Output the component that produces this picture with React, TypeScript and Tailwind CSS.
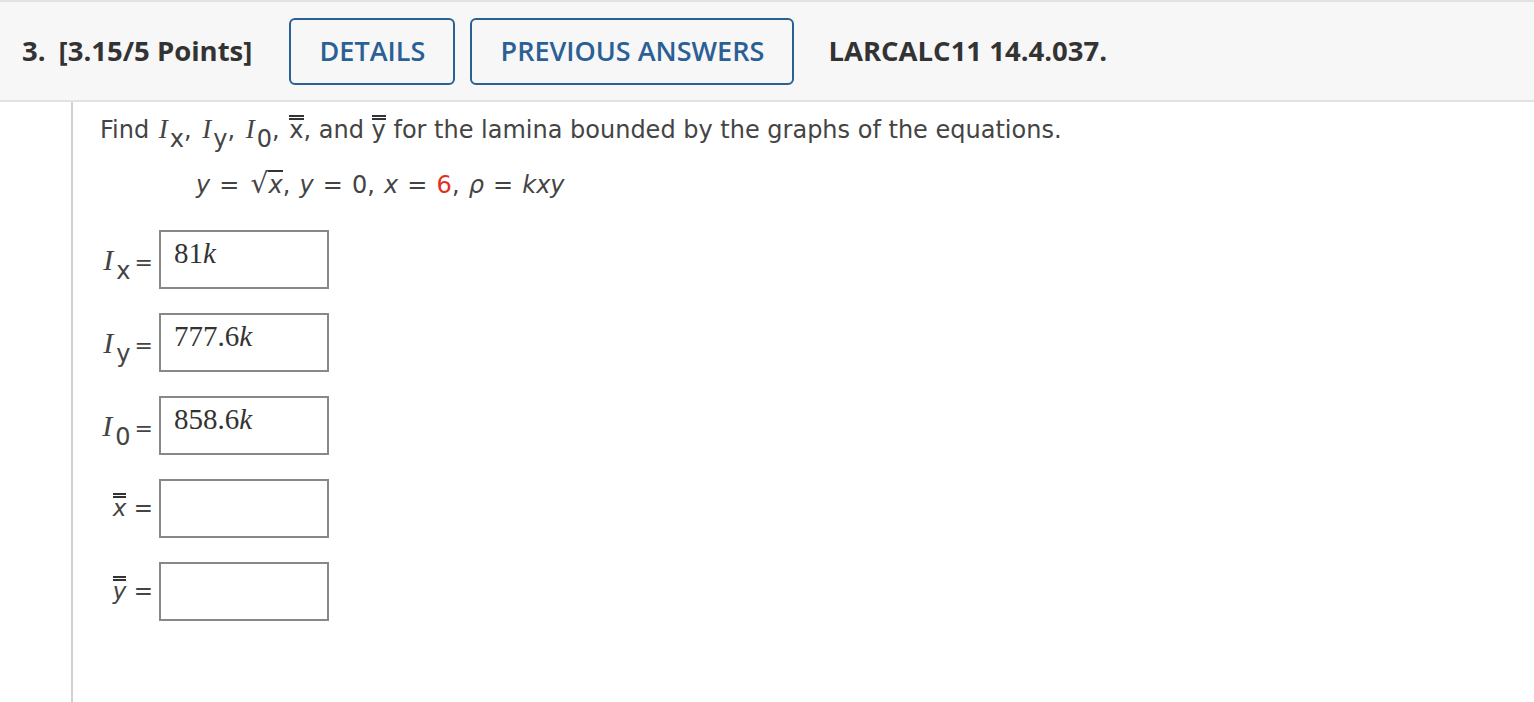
import type { ReactNode } from 'react';

const serif = "font-['Liberation_Serif','DejaVu_Serif',serif]";

function Bar({ children }: { children: ReactNode }) {
    // double overline used for centroid symbols
    return (
        <span className="inline-block border-t-[5px] border-double border-[#333] leading-[0.9]">
            {children}
        </span>
    );
}

function Sub({ children, size = 'text-[24px]', gap = 'ml-[1px]' }: { children: ReactNode; size?: string; gap?: string }) {
    return <span className={`relative top-[9px] not-italic ${gap} ${size}`}>{children}</span>;
}

function Answer({ label, value }: { label: ReactNode; value?: ReactNode }) {
    return (
        <div className="flex items-center">
            <div className="w-[61px] flex items-center justify-end pr-[6px] text-[#444]">{label}</div>
            <div className="w-[170px] h-[59px] border-2 border-[#888] bg-white px-[13px]">
                <span className={`${serif} text-[29px] leading-[42px] text-[#333]`}>{value}</span>
            </div>
        </div>
    );
}

function Moment({ sub }: { sub: string }) {
    return (
        <span className="flex items-baseline">
            <span className={`${serif} italic text-[30px]`}>I</span>
            <Sub size="text-[24px]" gap="ml-[3px]">{sub}</Sub>
            <span className="text-[22px] ml-[4px]">=</span>
        </span>
    );
}

export default function App() {
    return (
        <div className="min-h-[702px] bg-white font-['DejaVu_Sans','Verdana',sans-serif]">
            {/* Header */}
            <div className="border-t-2 border-b-2 border-[#e2e2e2] bg-[#f7f7f7] h-[102px] flex items-center pl-[22px] font-['Open_Sans',sans-serif] text-[#333]">
                <span className="text-[27.5px] font-bold">3.</span>
                <span className="text-[27.5px] font-bold ml-[13px]">[3.15/5 Points]</span>
                <button className="ml-[37px] h-[67px] w-[166px] rounded-[6px] border-2 border-[#2b6094] text-[27px] font-semibold text-[#2b6094]">
                    DETAILS
                </button>
                <button className="ml-[15px] h-[67px] w-[324px] rounded-[6px] border-2 border-[#2b6094] text-[27px] font-semibold text-[#2b6094]">
                    PREVIOUS ANSWERS
                </button>
                <span className="ml-[34px] text-[27.5px] font-bold">LARCALC11 14.4.037.</span>
            </div>

            {/* Body */}
            <div className="ml-[71px] border-l-2 border-[#d0d0d0] min-h-[600px] pl-[27px] pt-[10px] text-[#444]">
                <p className="text-[24px] leading-[34px]">
                    Find <span className={`${serif} italic text-[27px] ml-[2px]`}>I</span><Sub gap="ml-[2px]">x</Sub>,{' '}
                    <span className={`${serif} italic text-[27px] ml-[3px]`}>I</span><Sub gap="ml-[2px]">y</Sub>,{' '}
                    <span className={`${serif} italic text-[27px] ml-[3px]`}>I</span><Sub gap="ml-[2px]">0</Sub>,{' '}
                    <span className="ml-[2px]"><Bar>x</Bar></span>, and <Bar>y</Bar> for the lamina bounded by the graphs of the equations.
                </p>
                <p className="text-[24px] leading-[34px] mt-[20px] pl-[96px] [word-spacing:1.5px]">
                    <i>y</i> = <span className="text-[28px] ml-[2px]">√</span><span className="border-t-2 border-[#333] inline-block leading-[1.1]"><i>x</i></span>,{' '}
                    <i>y</i> = 0, <i>x</i> = <span className="text-[#e0301e]">6</span>, <i>ρ</i> = <i>kxy</i>
                </p>

                <div className="mt-[28px] flex flex-col gap-[24px] ml-[-2px]">
                    <Answer label={<Moment sub="x" />} value={<>81<i>k</i></>} />
                    <Answer label={<Moment sub="y" />} value={<>777.6<i>k</i></>} />
                    <Answer label={<Moment sub="0" />} value={<>858.6<i>k</i></>} />
                    <Answer
                        label={
                            <span className="text-[23px]">
                                <Bar><i>x</i></Bar> =
                            </span>
                        }
                    />
                    <Answer
                        label={
                            <span className="text-[23px]">
                                <Bar><i>y</i></Bar> =
                            </span>
                        }
                    />
                </div>
            </div>
        </div>
    );
}
